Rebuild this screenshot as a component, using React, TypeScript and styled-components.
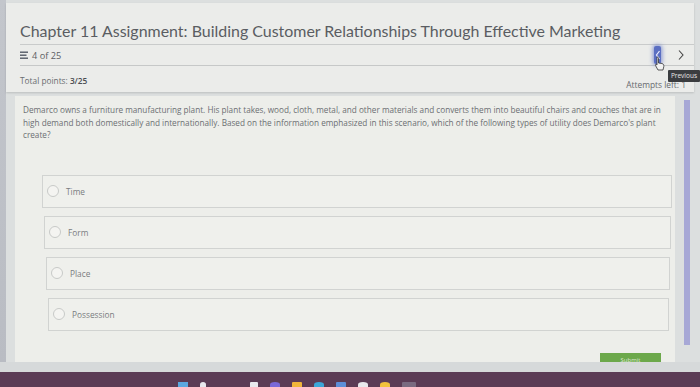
import React from "react";
import styled, { createGlobalStyle } from "styled-components";

const Global = createGlobalStyle`
  html, body { margin: 0; padding: 0; }
  body { width: 700px; height: 387px; overflow: hidden; font-family: "Open Sans", "Liberation Sans", sans-serif; }
`;

const Screen = styled.div`
  width: 700px;
  height: 387px;
  display: flex;
  flex-direction: column;
  background: #dcdfdf;
  overflow: hidden;
`;

const Upper = styled.div`
  flex: 1;
  display: flex;
  min-height: 0;
`;

const LeftStrip = styled.div`
  width: 6px;
  background: linear-gradient(#c3c6cc, #b9bcc3);
`;

const MainCol = styled.div`
  flex: 1;
  display: flex;
  flex-direction: column;
  padding-top: 3px;
  min-width: 0;
`;

const Header = styled.div`
  position: relative;
  height: 89px;
  background: #ebecea;
  margin-right: 6px;
  box-shadow: 0 1px 2px rgba(0,0,0,0.15);
  display: flex;
  flex-direction: column;
  padding-left: 14px;
`;

const Title = styled.h1`
  margin: 0;
  height: 42px;
  box-sizing: border-box;
  padding-top: 17px;
  font-family: Lato, "Open Sans", sans-serif;
  font-weight: 400;
  font-size: 15.95px;
  line-height: 22px;
  color: #5a5d62;
  border-bottom: 1px solid #c9cbcb;
  white-space: nowrap;
`;

const NavRow = styled.div`
  height: 21px;
  display: flex;
  align-items: center;
  justify-content: space-between;
  border-bottom: 1px solid #c6c8c8;
  box-sizing: border-box;
`;

const Count = styled.div`
  display: flex;
  align-items: center;
  gap: 3px;
  font-size: 9.2px;
  color: #5b5e63;
`;

const Nav = styled.div`
  display: flex;
  align-items: center;
  gap: 15px;
  padding-right: 8px;
`;

const NavBtn = styled.div<{ $active?: boolean }>`
  width: ${p => (p.$active ? "7px" : "10px")};
  height: 18px;
  display: flex;
  align-items: center;
  justify-content: center;
  border-radius: 2px;
  background: ${p => (p.$active ? "#5b6fc2" : "transparent")};
  box-shadow: ${p => (p.$active ? "0 0 4px 1px rgba(90,110,200,0.7)" : "none")};
  color: #444;
`;

const PointsRow = styled.div`
  flex: 1;
  display: flex;
  align-items: center;
  justify-content: space-between;
  font-size: 8.3px;
  color: #6a6d70;
  padding-right: 8px;
  padding-top: 3px;
`;

const Attempts = styled.span`
  font-size: 8.4px;
  color: #676a6e;
  padding-top: 8px;
`;

const Tooltip = styled.div`
  position: absolute;
  right: -6px;
  top: 67px;
  background: #3b3d40;
  color: #e8e8e8;
  font-size: 6.5px;
  padding: 1px 3px 2px;
  border-radius: 1px;
`;

const Cursor = styled.svg`
  position: absolute;
  left: 648px;
  top: 53px;
`;

const BodyRow = styled.div`
  flex: 1;
  display: flex;
  padding-top: 4px;
  min-height: 0;
`;

const Card = styled.div`
  flex: 0 0 657px;
  margin-left: 9px;
  background: #edeeea;
  display: flex;
  flex-direction: column;
  padding: 8px 0 0 8px;
  box-sizing: border-box;
  position: relative;
`;

const Question = styled.p`
  margin: 0;
  width: 652px;
  font-size: 8.2px;
  line-height: 12.5px;
  color: #6c6f73;
`;

const Options = styled.div`
  margin-top: 33px;
  display: flex;
  flex-direction: column;
  gap: 8px;
  padding-left: 19px;
  padding-right: 3px;
`;

const Option = styled.div<{ $shift: number }>`
  height: 33px;
  box-sizing: border-box;
  border: 1px solid #d1d3d1;
  background: #eff0ec;
  display: flex;
  align-items: center;
  gap: 7px;
  padding-left: 4px;
  margin-left: ${p => p.$shift}px;
  margin-right: ${p => p.$shift / 2}px;
  font-size: 8.3px;
  color: #7a7c80;
`;

const Radio = styled.span`
  width: 12px;
  height: 12px;
  border-radius: 50%;
  border: 1px solid #c8cac8;
  background: #f4f4f1;
  box-sizing: border-box;
`;

const Submit = styled.div`
  position: absolute;
  left: 585px;
  bottom: 0;
  width: 61px;
  height: 9px;
  background: #6ca84b;
  color: #dfe9d5;
  font-size: 6px;
  line-height: 14px;
  overflow: hidden;
  text-align: center;
`;

const ScrollCol = styled.div`
  flex: 1;
  display: flex;
  justify-content: flex-end;
  padding-right: 10px;
  padding-top: 4px;
`;

const ScrollThumb = styled.div`
  width: 6px;
  height: 245px;
  background: #a7a8d6;
`;

const Gap = styled.div`
  height: 10px;
  background: #d6d9da;
`;

const Taskbar = styled.div`
  height: 15px;
  background: #5b3b55;
  display: flex;
  align-items: flex-end;
  gap: 12px;
  padding-left: 178px;
`;

const TaskIcon = styled.div<{ $c: string; $r?: string; $w?: number }>`
  width: ${p => p.$w ?? 10}px;
  height: 5px;
  background: ${p => p.$c};
  border-radius: ${p => p.$r ?? "1px"} ${p => p.$r ?? "1px"} 0 0;
`;

export default function App() {
  return (
    <Screen>
      <Global />
      <Upper>
        <LeftStrip />
        <MainCol>
          <Header>
            <Title>Chapter 11 Assignment: Building Customer Relationships Through Effective Marketing</Title>
            <NavRow>
              <Count>
                <svg width="9" height="9" viewBox="0 0 9 9">
                  <rect x="0" y="0.5" width="8" height="1.4" fill="#555a66" />
                  <rect x="0" y="3.5" width="6.5" height="1.4" fill="#555a66" />
                  <rect x="0" y="6.5" width="8" height="1.4" fill="#555a66" />
                </svg>
                4 of 25
              </Count>
              <Nav>
                <NavBtn $active>
                  <svg width="6" height="10" viewBox="0 0 6 10">
                    <path d="M4.5 1 L1.5 5 L4.5 9" stroke="#eef" strokeWidth="1.2" fill="none" />
                  </svg>
                </NavBtn>
                <NavBtn>
                  <svg width="8" height="12" viewBox="0 0 8 12">
                    <path d="M2 1.5 L6 6 L2 10.5" stroke="#444" strokeWidth="1.1" fill="none" />
                  </svg>
                </NavBtn>
              </Nav>
            </NavRow>
            <PointsRow>
              <span>Total points: <b style={{ color: "#4a4d52", fontWeight: 600 }}>3/25</b></span>
              <Attempts>Attempts left: 1</Attempts>
            </PointsRow>
            <Tooltip>Previous</Tooltip>
            <Cursor width="12" height="16" viewBox="0 0 12 16">
              <path d="M3 1 C4 1 4.5 1.5 4.5 2.5 L4.5 7 L8 7.5 C9.5 8 10 9 9.8 10.5 L9 14 L4 14 L1.5 9.5 C1 8.5 2 8 3 9 L3 2.5 Z" fill="#f2f2f2" stroke="#333" strokeWidth="0.8" />
            </Cursor>
          </Header>
          <BodyRow>
            <Card>
              <Question>
                Demarco owns a furniture manufacturing plant. His plant takes, wood, cloth, metal, and other materials and converts them into beautiful chairs and couches that are in high demand both domestically and internationally. Based on the information emphasized in this scenario, which of the following types of utility does Demarco's plant create?
              </Question>
              <Options>
                {["Time", "Form", "Place", "Possession"].map((o, i) => (
                  <Option key={o} $shift={i * 2}>
                    <Radio />
                    {o}
                  </Option>
                ))}
              </Options>
              <Submit>Submit</Submit>
            </Card>
            <ScrollCol>
              <ScrollThumb />
            </ScrollCol>
          </BodyRow>
        </MainCol>
      </Upper>
      <Gap />
      <Taskbar>
        <TaskIcon $c="#5aa8e0" $r="0" />
        <TaskIcon $c="#e8e8ee" $r="50%" $w={6} />
        <TaskIcon $c="transparent" $w={20} />
        <TaskIcon $c="#e9e9ee" $w={8} />
        <TaskIcon $c="#7a68d8" $r="50%" />
        <TaskIcon $c="#f0b53a" />
        <TaskIcon $c="#3aa6d8" $r="50%" />
        <TaskIcon $c="#5c8ed8" />
        <TaskIcon $c="#e8e8ec" $r="50%" />
        <TaskIcon $c="#f2c13b" $r="50%" />
        <TaskIcon $c="#7a6a80" $w={14} />
      </Taskbar>
    </Screen>
  );
}
